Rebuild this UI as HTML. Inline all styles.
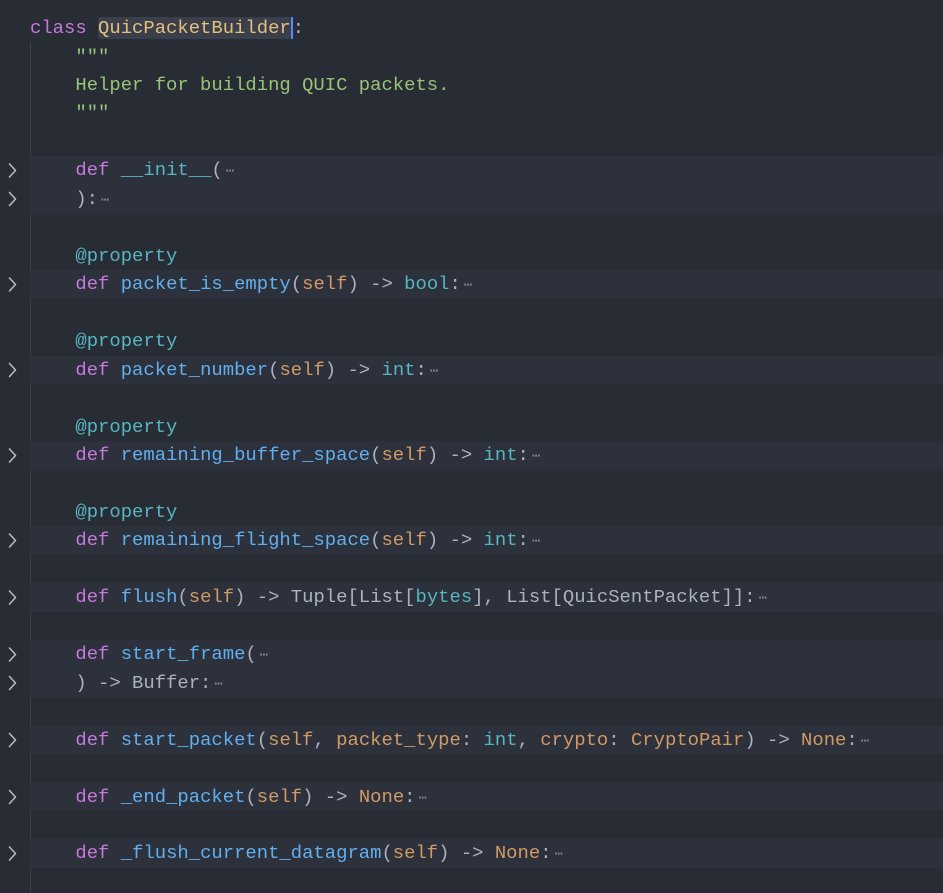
<!DOCTYPE html>
<html><head><meta charset="utf-8"><style>
html,body{margin:0;padding:0;background:#282c34;width:943px;height:893px;overflow:hidden}
.l{position:absolute;left:0;width:943px;height:28.47px;line-height:28.47px;font-family:"Liberation Mono",monospace;font-size:18.9px;color:#abb2bf;white-space:pre}
.f{background:#2c313b}
.t{position:absolute;left:30px;top:0}
.ch{position:absolute;left:8px;top:7px;width:10px;height:15px}
.k{color:#c678dd}.fn{color:#61afef}.s{color:#d19a66}.c{color:#e5c07b}.g{color:#98c379}.cy{color:#56b6c2}.e{color:#7f848e;font-size:14px;margin-left:3px}
.guide{position:absolute;left:30px;top:42px;width:1px;height:851px;background:#3b4048}
</style></head><body>
<div class="guide"></div>
<div class="l" style="top:14px"><span class="t"><span class="k">class</span> <span class="c" style="background:#3a3f4b;border-radius:3px">QuicPacketBuilder</span><span style="display:inline-block;width:2px;height:22px;background:#528bff;vertical-align:middle"></span>:</span></div>
<div class="l" style="top:42.5px"><span class="t">    <span class="g">"""</span></span></div>
<div class="l" style="top:71px"><span class="t">    <span class="g">Helper for building QUIC packets.</span></span></div>
<div class="l" style="top:99.4px"><span class="t">    <span class="g">"""</span></span></div>
<div class="l f" style="top:156.3px;left:30px;width:913px"><span class="t" style="left:0">    <span class="k">def</span> <span class="cy">__init__</span>(<span class="e">⋯</span></span></div>
<div class="l f" style="top:184.8px;left:30px;width:913px"><span class="t" style="left:0">    ):<span class="e">⋯</span></span></div>
<div class="l" style="top:241.7px"><span class="t">    <span class="cy">@property</span></span></div>
<div class="l f" style="top:270.2px;left:30px;width:913px"><span class="t" style="left:0">    <span class="k">def</span> <span class="fn">packet_is_empty</span>(<span class="s">self</span>) -&gt; <span class="cy">bool</span>:<span class="e">⋯</span></span></div>
<div class="l" style="top:327.1px"><span class="t">    <span class="cy">@property</span></span></div>
<div class="l f" style="top:355.6px;left:30px;width:913px"><span class="t" style="left:0">    <span class="k">def</span> <span class="fn">packet_number</span>(<span class="s">self</span>) -&gt; <span class="cy">int</span>:<span class="e">⋯</span></span></div>
<div class="l" style="top:412.5px"><span class="t">    <span class="cy">@property</span></span></div>
<div class="l f" style="top:441px;left:30px;width:913px"><span class="t" style="left:0">    <span class="k">def</span> <span class="fn">remaining_buffer_space</span>(<span class="s">self</span>) -&gt; <span class="cy">int</span>:<span class="e">⋯</span></span></div>
<div class="l" style="top:497.9px"><span class="t">    <span class="cy">@property</span></span></div>
<div class="l f" style="top:526.4px;left:30px;width:913px"><span class="t" style="left:0">    <span class="k">def</span> <span class="fn">remaining_flight_space</span>(<span class="s">self</span>) -&gt; <span class="cy">int</span>:<span class="e">⋯</span></span></div>
<div class="l f" style="top:583.3px;left:30px;width:913px"><span class="t" style="left:0">    <span class="k">def</span> <span class="fn">flush</span>(<span class="s">self</span>) -&gt; Tuple[List[<span class="cy">bytes</span>], List[QuicSentPacket]]:<span class="e">⋯</span></span></div>
<div class="l f" style="top:640.2px;left:30px;width:913px"><span class="t" style="left:0">    <span class="k">def</span> <span class="fn">start_frame</span>(<span class="e">⋯</span></span></div>
<div class="l f" style="top:668.7px;left:30px;width:913px"><span class="t" style="left:0">    ) -&gt; Buffer:<span class="e">⋯</span></span></div>
<div class="l f" style="top:725.6px;left:30px;width:913px"><span class="t" style="left:0">    <span class="k">def</span> <span class="fn">start_packet</span>(<span class="s">self</span>, <span class="s">packet_type</span>: <span class="cy">int</span>, <span class="s">crypto</span>: <span class="s">CryptoPair</span>) -&gt; <span class="s">None</span>:<span class="e">⋯</span></span></div>
<div class="l f" style="top:782.5px;left:30px;width:913px"><span class="t" style="left:0">    <span class="k">def</span> <span class="fn">_end_packet</span>(<span class="s">self</span>) -&gt; <span class="s">None</span>:<span class="e">⋯</span></span></div>
<div class="l f" style="top:839.4px;left:30px;width:913px"><span class="t" style="left:0">    <span class="k">def</span> <span class="fn">_flush_current_datagram</span>(<span class="s">self</span>) -&gt; <span class="s">None</span>:<span class="e">⋯</span></span></div>
<svg style="position:absolute;left:0;top:0" width="30" height="893">
<g fill="none" stroke="#b4bac4" stroke-width="1.6" stroke-linecap="round" stroke-linejoin="round">
<path d="M9.5 164 L15.5 170.5 L9.5 177"/>
<path d="M9.5 192.5 L15.5 199 L9.5 205.5"/>
<path d="M9.5 278 L15.5 284.5 L9.5 291"/>
<path d="M9.5 363.5 L15.5 370 L9.5 376.5"/>
<path d="M9.5 449 L15.5 455.5 L9.5 462"/>
<path d="M9.5 534 L15.5 540.5 L9.5 547"/>
<path d="M9.5 591 L15.5 597.5 L9.5 604"/>
<path d="M9.5 648 L15.5 654.5 L9.5 661"/>
<path d="M9.5 676.5 L15.5 683 L9.5 689.5"/>
<path d="M9.5 733.5 L15.5 740 L9.5 746.5"/>
<path d="M9.5 790.5 L15.5 797 L9.5 803.5"/>
<path d="M9.5 847 L15.5 853.5 L9.5 860"/>
</g></svg>
</body></html>
